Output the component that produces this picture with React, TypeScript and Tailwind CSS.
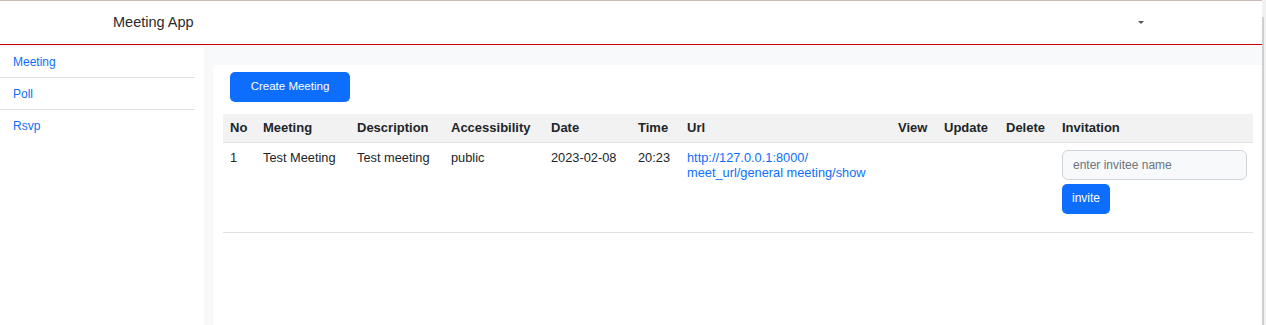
const columns = [
  { label: "No", width: "w-[33px]" },
  { label: "Meeting", width: "w-[94px]" },
  { label: "Description", width: "w-[94px]" },
  { label: "Accessibility", width: "w-[100px]" },
  { label: "Date", width: "w-[87px]" },
  { label: "Time", width: "w-[49px]" },
  { label: "Url", width: "w-[211px]" },
  { label: "View", width: "w-[46px]" },
  { label: "Update", width: "w-[62px]" },
  { label: "Delete", width: "w-[56px]" },
  { label: "Invitation", width: "w-[198px]" },
]

const navItems = ["Meeting", "Poll", "Rsvp"]

export default function App() {
  return (
    <div className="relative h-[325px] overflow-hidden bg-white pr-[4px] font-['Liberation_Sans',Arial,sans-serif] text-[#212529]">
      {/* scrollbar strip */}
      <div className="absolute right-0 top-0 h-full w-[4px] bg-[#f1f1f1]">
        <div className="mt-[17px] h-full w-[2px] bg-[#cfcfcf]" />
      </div>

      <header className="flex h-[45px] items-center justify-between border-t border-b border-t-[#c9bdb8] border-b-[#cc0000] pl-[113px] pr-[118px] shadow-[0_1px_2px_rgba(0,0,0,0.05)]">
        <span className="text-[14.5px] text-[#2b2b2b]">Meeting App</span>
        <span className="h-0 w-0 border-x-[3px] border-t-[3px] border-x-transparent border-t-[#555]" />
      </header>

      <div className="flex h-[280px]">
        <aside className="w-[204px] shrink-0 pt-[1px]">
          <ul className="w-[195px]">
            {navItems.map((item, i) => (
              <li
                key={item}
                className={`flex h-[32px] items-center pl-[13px] text-[12px] text-[#0d6efd] ${
                  i < navItems.length - 1 ? "border-b border-[#dee2e6]" : ""
                }`}
              >
                {item}
              </li>
            ))}
          </ul>
        </aside>

        <main className="flex-1 bg-[#f8f9fa] pl-[9px] pt-[20px]">
          <div className="h-full bg-white pl-[10px] pr-[9px] pt-[7px]">
            <button className="ml-[7px] h-[30px] w-[120px] rounded-[5px] bg-[#0d6efd] text-[11.5px] text-white">
              Create Meeting
            </button>

            <table className="mt-[12px] w-[1030px] table-fixed text-[13px]">
              <thead>
                <tr className="border-b border-[#dee2e6] bg-[#f2f2f2]">
                  {columns.map((c) => (
                    <th key={c.label} className={`${c.width} h-[28px] px-[7px] text-left font-bold`}>
                      {c.label}
                    </th>
                  ))}
                </tr>
              </thead>
              <tbody>
                <tr className="border-b border-[#dee2e6] align-top text-[12.8px] leading-[15px]">
                  <td className="px-[7px] pt-[7px]">1</td>
                  <td className="px-[7px] pt-[7px]">Test Meeting</td>
                  <td className="px-[7px] pt-[7px]">Test meeting</td>
                  <td className="px-[7px] pt-[7px]">public</td>
                  <td className="px-[7px] pt-[7px]">2023-02-08</td>
                  <td className="px-[7px] pt-[7px]">20:23</td>
                  <td className="px-[7px] pt-[7px] text-[#0d6efd]">
                    http://127.0.0.1:8000/
                    <br />
                    meet_url/general meeting/show
                  </td>
                  <td className="px-[7px]" />
                  <td className="px-[7px]" />
                  <td className="px-[7px]" />
                  <td className="px-[7px] pb-[18px] pt-[7px]">
                    <input
                      className="block h-[30px] w-[185px] rounded-[6px] border border-[#ced4da] bg-[#f8f9fa] px-[10px] text-[12px] outline-none placeholder:text-[#6c757d]"
                      placeholder="enter invitee name"
                    />
                    <button className="mt-[4px] block h-[30px] w-[48px] rounded-[5px] bg-[#0d6efd] text-[12px] text-white">
                      invite
                    </button>
                  </td>
                </tr>
              </tbody>
            </table>
          </div>
        </main>
      </div>
    </div>
  )
}
